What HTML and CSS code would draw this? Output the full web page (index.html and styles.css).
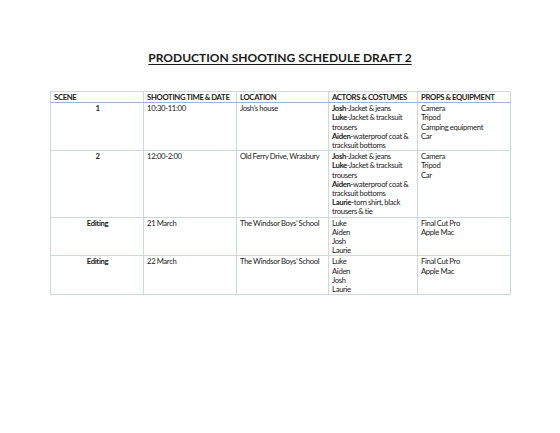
FILE: index.html
```html
<!DOCTYPE html>
<html>
<head>
<meta charset="utf-8">
<link rel="stylesheet" href="styles.css">
</head>
<body>
<div class="page">
  <h1 class="title">PRODUCTION SHOOTING SCHEDULE DRAFT 2</h1>
  <table class="sched">
    <colgroup>
      <col class="c1"><col class="c2"><col class="c3"><col class="c4"><col class="c5">
    </colgroup>
    <thead>
      <tr>
        <th>SCENE</th>
        <th>SHOOTING TIME &amp; DATE</th>
        <th>LOCATION</th>
        <th>ACTORS &amp; COSTUMES</th>
        <th>PROPS &amp; EQUIPMENT</th>
      </tr>
    </thead>
    <tbody>
      <tr>
        <td class="scene">1</td>
        <td>10:30-11:00</td>
        <td>Josh’s house</td>
        <td><b>Josh</b>-Jacket &amp; jeans<br><b>Luke</b>-Jacket &amp; tracksuit trousers<br><b>Aiden</b>-waterproof coat &amp; tracksuit bottoms</td>
        <td>Camera<br>Tripod<br>Camping equipment<br>Car</td>
      </tr>
      <tr>
        <td class="scene">2</td>
        <td>12:00-2:00</td>
        <td>Old Ferry Drive, Wrasbury</td>
        <td><b>Josh</b>-Jacket &amp; jeans<br><b>Luke</b>-Jacket &amp; tracksuit trousers<br><b>Aiden</b>-waterproof coat &amp; tracksuit bottoms<br><b>Laurie</b>-torn shirt, black trousers &amp; tie</td>
        <td>Camera<br>Tripod<br>Car</td>
      </tr>
      <tr>
        <td class="scene">Editing</td>
        <td>21 March</td>
        <td>The Windsor Boys’ School</td>
        <td>Luke<br>Aiden<br>Josh<br>Laurie</td>
        <td>Final Cut Pro<br>Apple Mac</td>
      </tr>
      <tr>
        <td class="scene">Editing</td>
        <td>22 March</td>
        <td>The Windsor Boys’ School</td>
        <td>Luke<br>Aiden<br>Josh<br>Laurie</td>
        <td>Final Cut Pro<br>Apple Mac</td>
      </tr>
    </tbody>
  </table>
</div>
</body>
</html>
```
FILE: styles.css
```css
html, body {
  margin: 0;
  padding: 0;
  background: #ffffff;
}
.page {
  width: 560px;
  height: 433px;
  padding-top: 50px;
  box-sizing: border-box;
  font-family: Lato, "Open Sans", sans-serif;
  color: #1e1e1e;
}
.title {
  margin: 0 0 25px 0;
  text-align: center;
  font-size: 12px;
  line-height: 16px;
  font-weight: 700;
  text-decoration: underline;
  text-underline-offset: 2px;
  text-decoration-thickness: 1px;
  color: #1a1a1a;
}
.sched {
  margin-left: 50px;
  width: 461px;
  border-collapse: collapse;
  table-layout: fixed;
  font-size: 7.7px;
  line-height: 9.2px;
  letter-spacing: -0.32px;
  word-spacing: -0.3px;
  color: #222222;
}
.c1 { width: 93px; }
.c2 { width: 93px; }
.c3 { width: 92px; }
.c4 { width: 89px; }
.c5 { width: 93px; }
.sched th, .sched td {
  border: 1px solid #cdd8e4;
  padding: 1px 2px 0 3px;
  text-align: left;
  vertical-align: top;
}
.sched th {
  font-weight: 700;
  border-bottom: 1px solid #9fb5cf;
  padding-top: 1px;
  padding-bottom: 0;
}
.sched td.scene {
  text-align: center;
  font-weight: 700;
}
.sched b {
  font-weight: 700;
}
```
